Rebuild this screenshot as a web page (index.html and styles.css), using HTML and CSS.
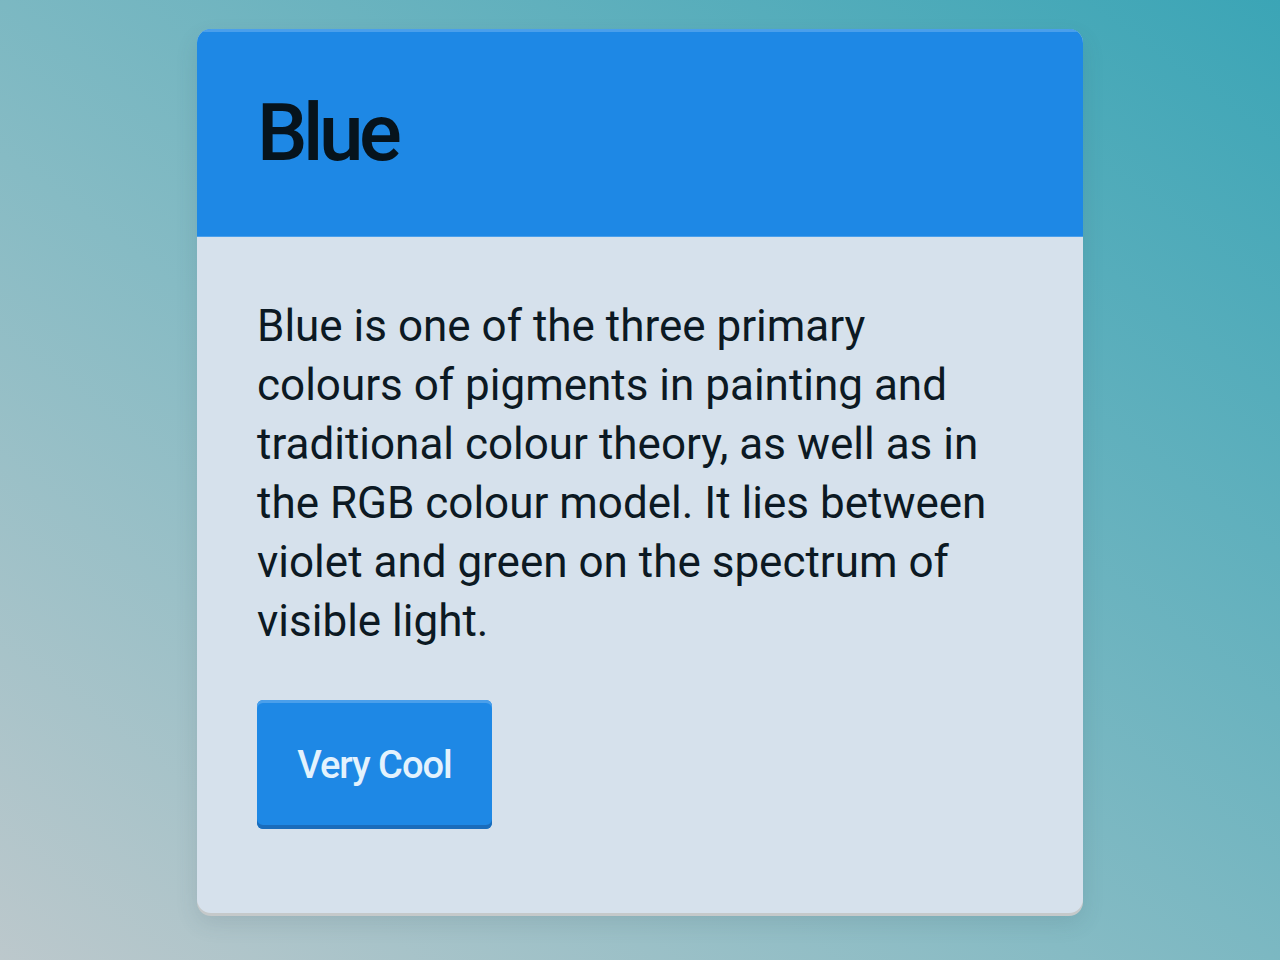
FILE: index.html
```html
<!DOCTYPE html>
<html lang="en">
<head>
<meta charset="utf-8">
<title>Blue</title>
<link rel="stylesheet" href="styles.css">
</head>
<body>
  <main class="page">
    <article class="card">
      <header class="card-header">
        <h1 class="card-title">Blue</h1>
      </header>
      <section class="card-body">
        <p class="card-text">Blue is one of the three primary colours of pigments in painting and traditional colour theory, as well as in the RGB colour model. It lies between violet and green on the spectrum of visible light.</p>
        <button class="btn" type="button">Very Cool</button>
      </section>
    </article>
  </main>
</body>
</html>
```

FILE: styles.css
```css
html, body {
  margin: 0;
  padding: 0;
  height: 100%;
}

body {
  font-family: Roboto, "Liberation Sans", sans-serif;
  background: linear-gradient(to top right, #bcc8cc 0%, #86bbc4 42%, #3ba5b6 100%);
  background-attachment: fixed;
  min-height: 960px;
}

.page {
  display: flex;
  justify-content: center;
  padding-top: 29px;
}

.card {
  width: 886px;
  border-radius: 14px;
  overflow: hidden;
  background: #d6e1ec;
  box-shadow: 0 3px 0 #c5c9ca, 0 10px 22px rgba(60, 80, 90, 0.14);
}

.card-header {
  background: #1e88e5;
  box-shadow: inset 0 3px 0 #4a9feb, inset 0 -1px 0 #4a9feb;
  padding: 60px 60px 60px;
}

.card-title {
  margin: 0;
  font-size: 80px;
  line-height: 88px;
  font-weight: 500;
  color: #06131c;
  letter-spacing: -4.5px;
}

.card-body {
  padding: 60px 60px 84px;
}

.card-text {
  margin: 0 0 49px;
  max-width: 740px;
  font-size: 44px;
  line-height: 59px;
  color: #0c1923;
}

.btn {
  display: block;
  width: 235px;
  height: 129px;
  border: 0;
  border-radius: 6px;
  background: #1e88e5;
  box-shadow: inset 0 3px 0 #4a9feb, inset 0 -4px 0 #1a6cbb;
  color: #e3f2fd;
  font-family: Roboto, "Liberation Sans", sans-serif;
  font-size: 38px;
  font-weight: 500;
  letter-spacing: -1px;
  padding: 0;
  cursor: pointer;
}
```
